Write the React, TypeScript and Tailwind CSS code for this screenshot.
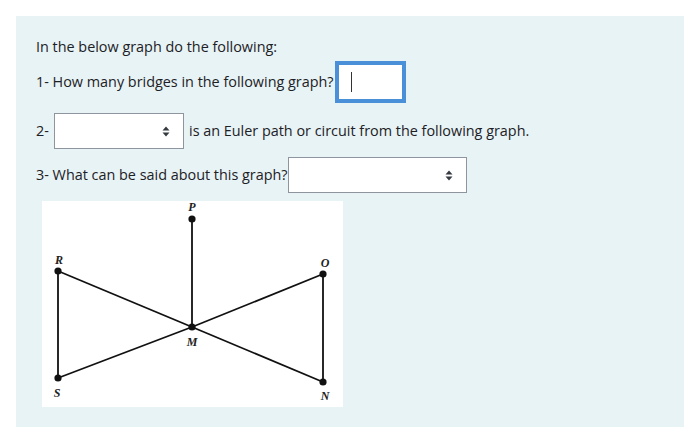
import React from "react";

function Arrows() {
  return (
    <svg width="8" height="11" viewBox="0 0 8 11" className="flex-shrink-0">
      <path d="M0.5 4.5 L4 0.5 L7.5 4.5 Z" fill="#343a40" />
      <path d="M0.5 6.5 L4 10.5 L7.5 6.5 Z" fill="#343a40" />
    </svg>
  );
}

function FakeSelect({ width, arrowRight }: { width: string; arrowRight: string }) {
  return (
    <div className={`flex items-center justify-end h-[36px] bg-white border border-[#8f959e] ${width} ${arrowRight}`}>
      <Arrows />
    </div>
  );
}

const nodes = [
  { id: "P", x: 150, y: 18, lx: 150, ly: 10 },
  { id: "R", x: 16, y: 70, lx: 17, ly: 63 },
  { id: "O", x: 281, y: 73, lx: 283, ly: 66 },
  { id: "M", x: 150, y: 126, lx: 150, ly: 145 },
  { id: "S", x: 16, y: 177, lx: 15, ly: 196 },
  { id: "N", x: 281, y: 181, lx: 283, ly: 199 },
];

const edges: [string, string][] = [
  ["P", "M"],
  ["R", "M"],
  ["S", "M"],
  ["O", "M"],
  ["N", "M"],
  ["R", "S"],
  ["O", "N"],
];

function Graph() {
  const get = (id: string) => nodes.find((n) => n.id === id)!;
  return (
    <svg width="301" height="206" viewBox="0 0 301 206" className="block bg-white">
      {edges.map(([a, b]) => {
        const p = get(a);
        const q = get(b);
        return <line key={a + b} x1={p.x} y1={p.y} x2={q.x} y2={q.y} stroke="#111" strokeWidth={1.8} />;
      })}
      {nodes.map((n) => (
        <g key={n.id}>
          <circle cx={n.x} cy={n.y} r={3.6} fill="#111" />
          <text
            x={n.lx}
            y={n.ly}
            textAnchor="middle"
            fontFamily="'Liberation Serif', serif"
            fontStyle="italic"
            fontWeight="bold"
            fontSize="12"
            fill="#222"
          >
            {n.id}
          </text>
        </g>
      ))}
    </svg>
  );
}

export default function App() {
  return (
    <div className="w-[684px] h-[430px] bg-white pt-[16px] pl-[16px] font-['Open_Sans',sans-serif] text-[14.4px] text-[#1d2125]">
      <div className="h-[411px] bg-[#e7f3f5] pl-[20px] pt-[21px]">
        <p className="leading-[20px]">In the below graph do the following:</p>

        <div className="flex items-center mt-[4px]">
          <span className="leading-[20px]">1- How many bridges in the following graph?</span>
          <div className="ml-[1px] w-[71px] h-[42px] bg-white border-[4px] border-[#4a90d9] flex items-center pl-[12px]">
            <span className="block w-[1px] h-[20px] bg-[#333]" />
          </div>
        </div>

        <div className="flex items-center mt-[10px]">
          <span className="leading-[20px] w-[18px]">2-</span>
          <FakeSelect width="w-[130px]" arrowRight="pr-[13px]" />
          <span className="leading-[20px] ml-[5px]">is an Euler path or circuit from the following graph.</span>
        </div>

        <div className="flex items-center mt-[8px]">
          <span className="leading-[20px]">3- What can be said about this graph?</span>
          <FakeSelect width="w-[179px]" arrowRight="pr-[13px]" />
        </div>

        <div className="mt-[8px] ml-[6px]">
          <Graph />
        </div>
      </div>
    </div>
  );
}
